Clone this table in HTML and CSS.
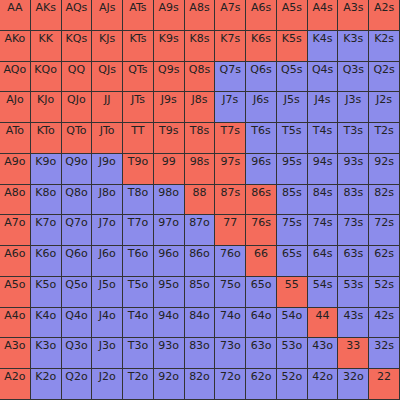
FILE: index.html
```html
<!DOCTYPE html>
<html>

<head>
    <meta charset="UTF-8">
    <link rel="stylesheet" href="styles.css">
</head>

<body>
    <div class="range-grid" id="grid"></div>
    <script>
        const ranks = ['A', 'K', 'Q', 'J', 'T', '9', '8', '7', '6', '5', '4', '3', '2'];

        // 红色区域：每行最后一个红色格子的列号（对角线以上为同花）
        const raiseUntil = [12, 9, 6, 6, 7, 7, 8, 8, 8, 9, 10, 11, 12];

        function inRange(row, col) {
            if (col === 0) return true;
            if (row === col) return true;
            if (col > row) return col <= raiseUntil[row];
            // 非同花：只有相邻的几手牌
            const offsuit = { '1,0': 1, '2,0': 1, '2,1': 1, '3,0': 1, '3,1': 1, '3,2': 1,
                '4,0': 1, '4,1': 1, '4,2': 1, '4,3': 1, '5,4': 1 };
            return !!offsuit[row + ',' + col];
        }

        const grid = document.getElementById('grid');
        ranks.forEach((r1, row) => {
            ranks.forEach((r2, col) => {
                const cell = document.createElement('div');
                let label;
                if (row === col) label = r1 + r2;
                else if (col > row) label = r1 + r2 + 's';
                else label = r2 + r1 + 'o';
                cell.className = 'hand ' + (inRange(row, col) ? 'raise' : 'fold');
                cell.textContent = label;
                grid.appendChild(cell);
            });
        });
    </script>
</body>
</html>
```

FILE: styles.css
```css
:root {
    --raise-color: #f46c5c;
    --fold-color: #8c8ceb;
    --line-color: #333;
}

body {
    margin: 0;
    font-family: 'DejaVu Sans', sans-serif;
}

.range-grid {
    width: 400px;
    height: 400px;
    display: grid;
    grid-template-columns: repeat(13, 1fr);
    grid-template-rows: repeat(13, 1fr);
}

.hand {
    box-sizing: border-box;
    border-right: 1px solid var(--line-color);
    border-bottom: 1px solid var(--line-color);
    text-align: center;
    font-size: 11px;
    line-height: 14px;
    padding-top: 1px;
    color: #222;
}

.raise {
    background: var(--raise-color);
}

.fold {
    background: var(--fold-color);
}
```
